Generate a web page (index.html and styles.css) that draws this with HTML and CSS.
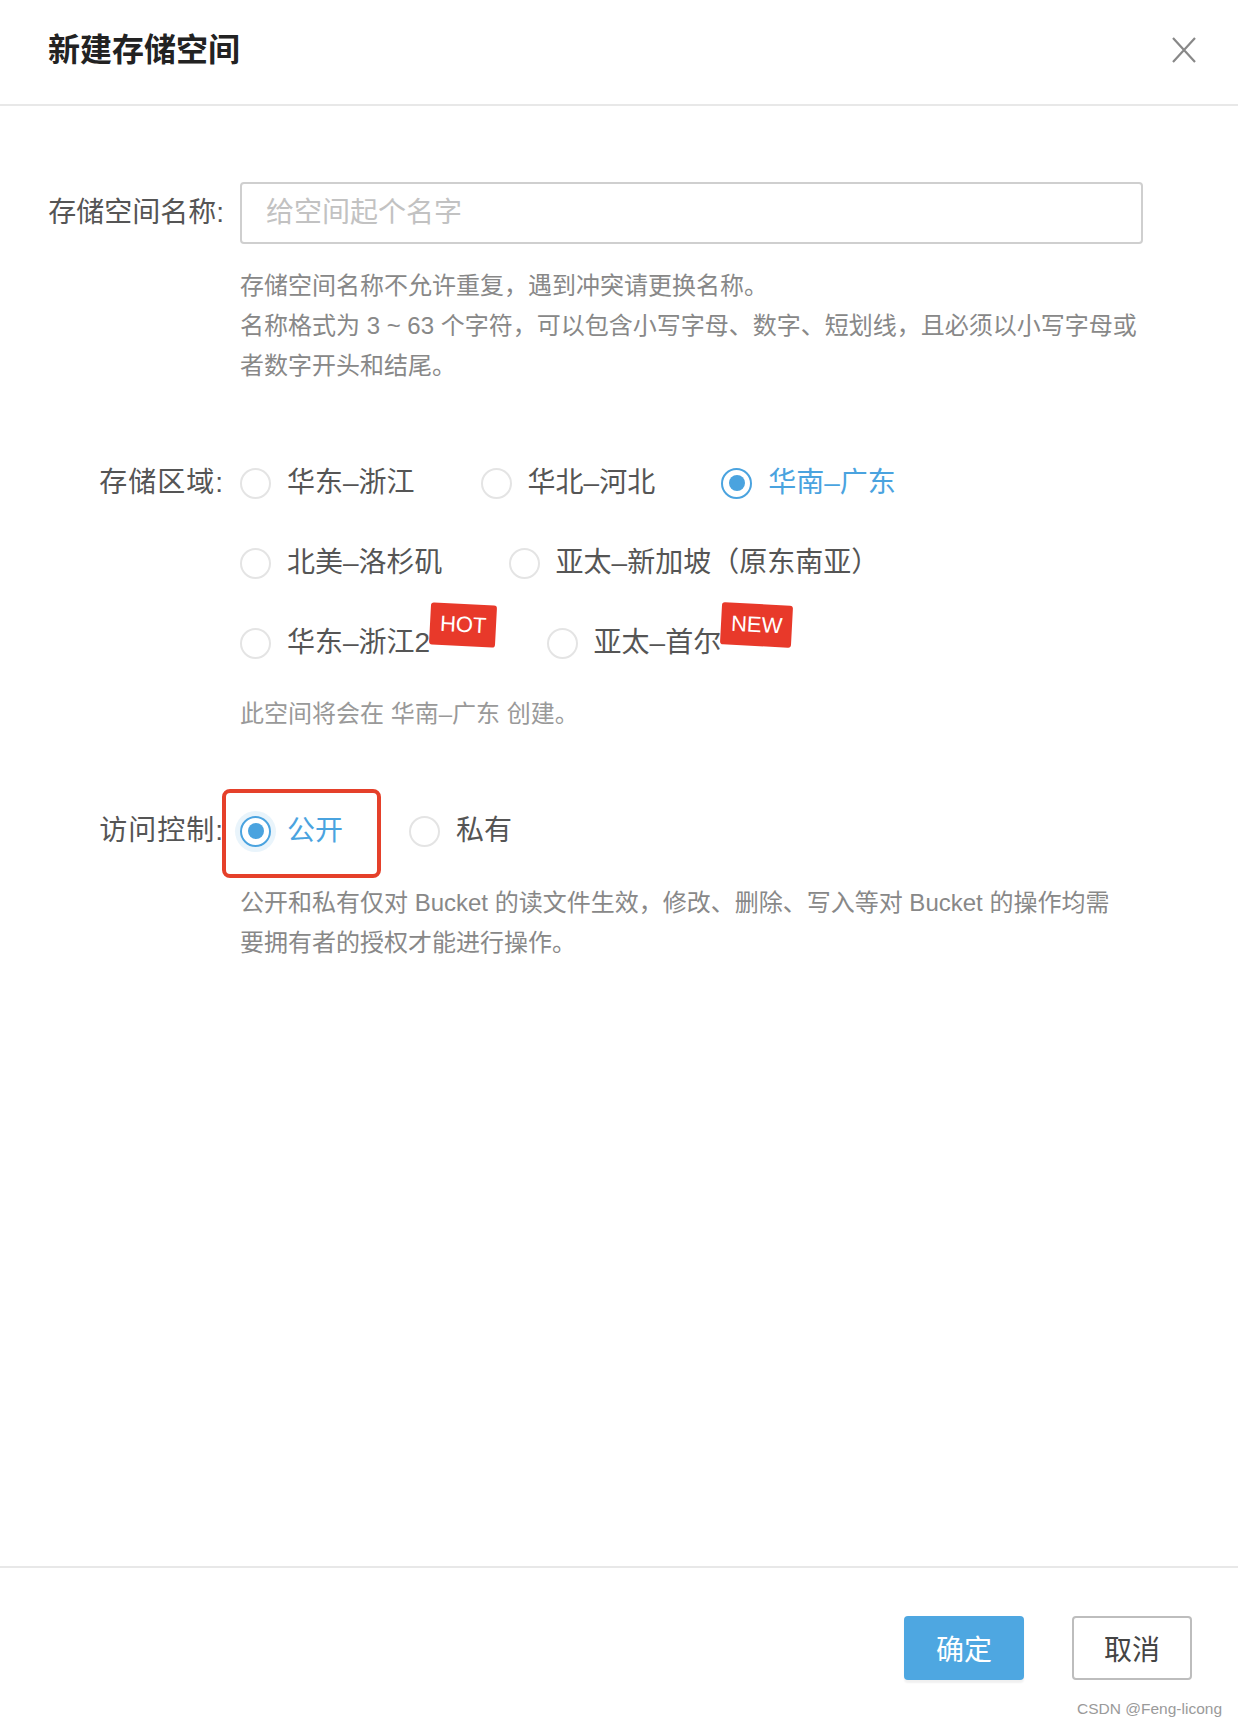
FILE: index.html
```html
<!DOCTYPE html>
<html lang="zh-CN">
<head>
  <meta charset="UTF-8">
  <title>新建存储空间</title>
  <link rel="stylesheet" href="styles.css">
</head>
<body>

  <div class="dialog">
    <div class="dialog-header">
      <h2 class="dialog-title">新建存储空间</h2>
      <button class="close-btn" title="关闭">
        <svg width="24" height="26" viewBox="0 0 24 26">
          <path d="M1 1 L23 25 M23 1 L1 25" stroke="#888" stroke-width="2.2" fill="none"/>
        </svg>
      </button>
    </div>

    <div class="dialog-body">
      <!-- bucket name -->
      <div class="form-row">
        <label class="form-label label-input" for="bucketName">存储空间名称:</label>
        <div class="form-control">
          <input class="text-input" id="bucketName" type="text" placeholder="给空间起个名字">
          <p class="help">存储空间名称不允许重复，遇到冲突请更换名称。<br>名称格式为 3 ~ 63 个字符，可以包含小写字母、数字、短划线，且必须以小写字母或者数字开头和结尾。</p>
        </div>
      </div>

      <!-- region -->
      <div class="form-row section">
        <span class="form-label short">存储区域:</span>
        <div class="form-control">
          <div class="radio-line">
            <label class="radio-option"><span class="radio"></span>华东–浙江</label>
            <label class="radio-option"><span class="radio"></span>华北–河北</label>
            <label class="radio-option checked"><span class="radio"></span>华南–广东</label>
          </div>
          <div class="radio-line">
            <label class="radio-option"><span class="radio"></span>北美–洛杉矶</label>
            <label class="radio-option"><span class="radio"></span>亚太–新加坡（原东南亚）</label>
          </div>
          <div class="radio-line">
            <label class="radio-option"><span class="radio"></span>华东–浙江2<span class="tag">HOT</span></label>
            <label class="radio-option"><span class="radio"></span>亚太–首尔<span class="tag">NEW</span></label>
          </div>
          <p class="help note">此空间将会在 华南–广东 创建。</p>
        </div>
      </div>

      <!-- access -->
      <div class="form-row section">
        <span class="form-label short">访问控制:</span>
        <div class="form-control">
          <div class="radio-line access-line">
            <label class="radio-option checked focused"><span class="radio"></span>公开</label>
            <label class="radio-option"><span class="radio"></span>私有</label>
            <span class="mark-box"></span>
          </div>
          <p class="help access-help">公开和私有仅对 Bucket 的读文件生效，修改、删除、写入等对 Bucket 的操作均需要拥有者的授权才能进行操作。</p>
        </div>
      </div>
    </div>

    <div class="dialog-footer">
      <button class="btn btn-primary">确定</button>
      <button class="btn">取消</button>
      <span class="watermark">CSDN @Feng-licong</span>
    </div>
  </div>

</body>
</html>
```

FILE: styles.css
```css
body {
  margin: 0;
  padding: 0;
  background-color: white;
  font-family: "Liberation Sans", "Noto Sans CJK SC", sans-serif;
  color: #555;
}

.dialog {
  position: relative;
  width: 1238px;
  height: 1726px;
  display: flex;
  flex-direction: column;
}

.dialog-header {
  height: 106px;
  box-sizing: border-box;
  border-bottom: 2px solid #e8e8e8;
  padding: 0 42px 4px 48px;
  display: flex;
  align-items: center;
  justify-content: space-between;
}

.dialog-title {
  margin: 0;
  font-size: 32px;
  line-height: 40px;
  font-weight: bold;
  color: #222;
}

.close-btn {
  border: none;
  background: none;
  padding: 0;
  width: 24px;
  height: 26px;
  cursor: pointer;
}

.close-btn svg {
  display: block;
}

.dialog-body {
  flex: 1;
  padding-top: 76px;
}

.form-row {
  display: flex;
  align-items: flex-start;
}

.section {
  margin-top: 77px;
}

.form-label {
  width: 176px;
  margin-left: 48px;
  margin-right: 16px;
  text-align: right;
  font-size: 28px;
  line-height: 40px;
  color: #555;
  flex-shrink: 0;
}

.form-label.short {
  letter-spacing: 1px;
}

.label-input {
  line-height: 62px;
}

.form-control {
  width: 903px;
}

.text-input {
  display: block;
  width: 903px;
  height: 62px;
  box-sizing: border-box;
  border: 2px solid #cfcfcf;
  border-radius: 4px;
  padding: 0 24px;
  font-family: inherit;
  font-size: 28px;
  color: #333;
  outline: none;
}

.text-input::placeholder {
  color: #c2c2c2;
}

.help {
  margin: 22px 0 0;
  font-size: 24px;
  line-height: 40px;
  color: #888;
}

.note {
  margin-top: 31px;
  color: #999;
}

.access-help {
  margin-top: 32px;
  width: 885px;
}

.radio-line {
  display: flex;
  height: 40px;
  margin-bottom: 40px;
}

.radio-line:last-of-type {
  margin-bottom: 0;
}

.radio-option {
  display: flex;
  align-items: center;
  margin-right: 66px;
  font-size: 28px;
  line-height: 40px;
  color: #555;
  cursor: pointer;
}

.radio {
  width: 31px;
  height: 31px;
  box-sizing: border-box;
  border: 2px solid #e4e4e4;
  border-radius: 50%;
  margin-right: 16px;
  position: relative;
  flex-shrink: 0;
}

.radio-option.checked {
  color: #4aa3df;
}

.radio-option.checked .radio {
  border-color: #4aa3df;
}

.radio-option.checked .radio::after {
  content: "";
  position: absolute;
  left: 5.5px;
  top: 5.5px;
  width: 16px;
  height: 16px;
  border-radius: 50%;
  background: #4aa3df;
}

.radio-option.focused .radio {
  box-shadow: 0 0 0 5px rgba(74, 163, 223, 0.12);
}

.tag {
  align-self: flex-start;
  display: inline-block;
  height: 42px;
  line-height: 42px;
  padding: 0 10px;
  margin-right: -16px;
  background: #e8392a;
  color: white;
  font-size: 22px;
  border-radius: 3px;
  transform: translateY(-19px) rotate(3deg);
}

.access-line {
  position: relative;
}

/* red frame drawn around the public option */
.mark-box {
  position: absolute;
  left: -18px;
  top: -22px;
  width: 159px;
  height: 89px;
  box-sizing: border-box;
  border: 4px solid #e5402a;
  border-radius: 8px;
}

.dialog-footer {
  height: 160px;
  border-top: 2px solid #e8e8e8;
  box-sizing: border-box;
  padding: 48px 46px 0 0;
  display: flex;
  justify-content: flex-end;
  align-items: flex-start;
  gap: 48px;
}

.btn {
  width: 120px;
  height: 64px;
  box-sizing: border-box;
  border: 2px solid #bdbdbd;
  border-radius: 4px;
  background: white;
  color: #444;
  font-family: inherit;
  font-size: 28px;
  cursor: pointer;
}

.btn-primary {
  border: none;
  background-color: #4ea7e1;
  color: white;
  box-shadow: 0 3px 2px rgba(0, 0, 0, 0.06);
}

.watermark {
  position: absolute;
  right: 16px;
  bottom: 8px;
  font-size: 15.5px;
  color: #9a9a9a;
}
```
